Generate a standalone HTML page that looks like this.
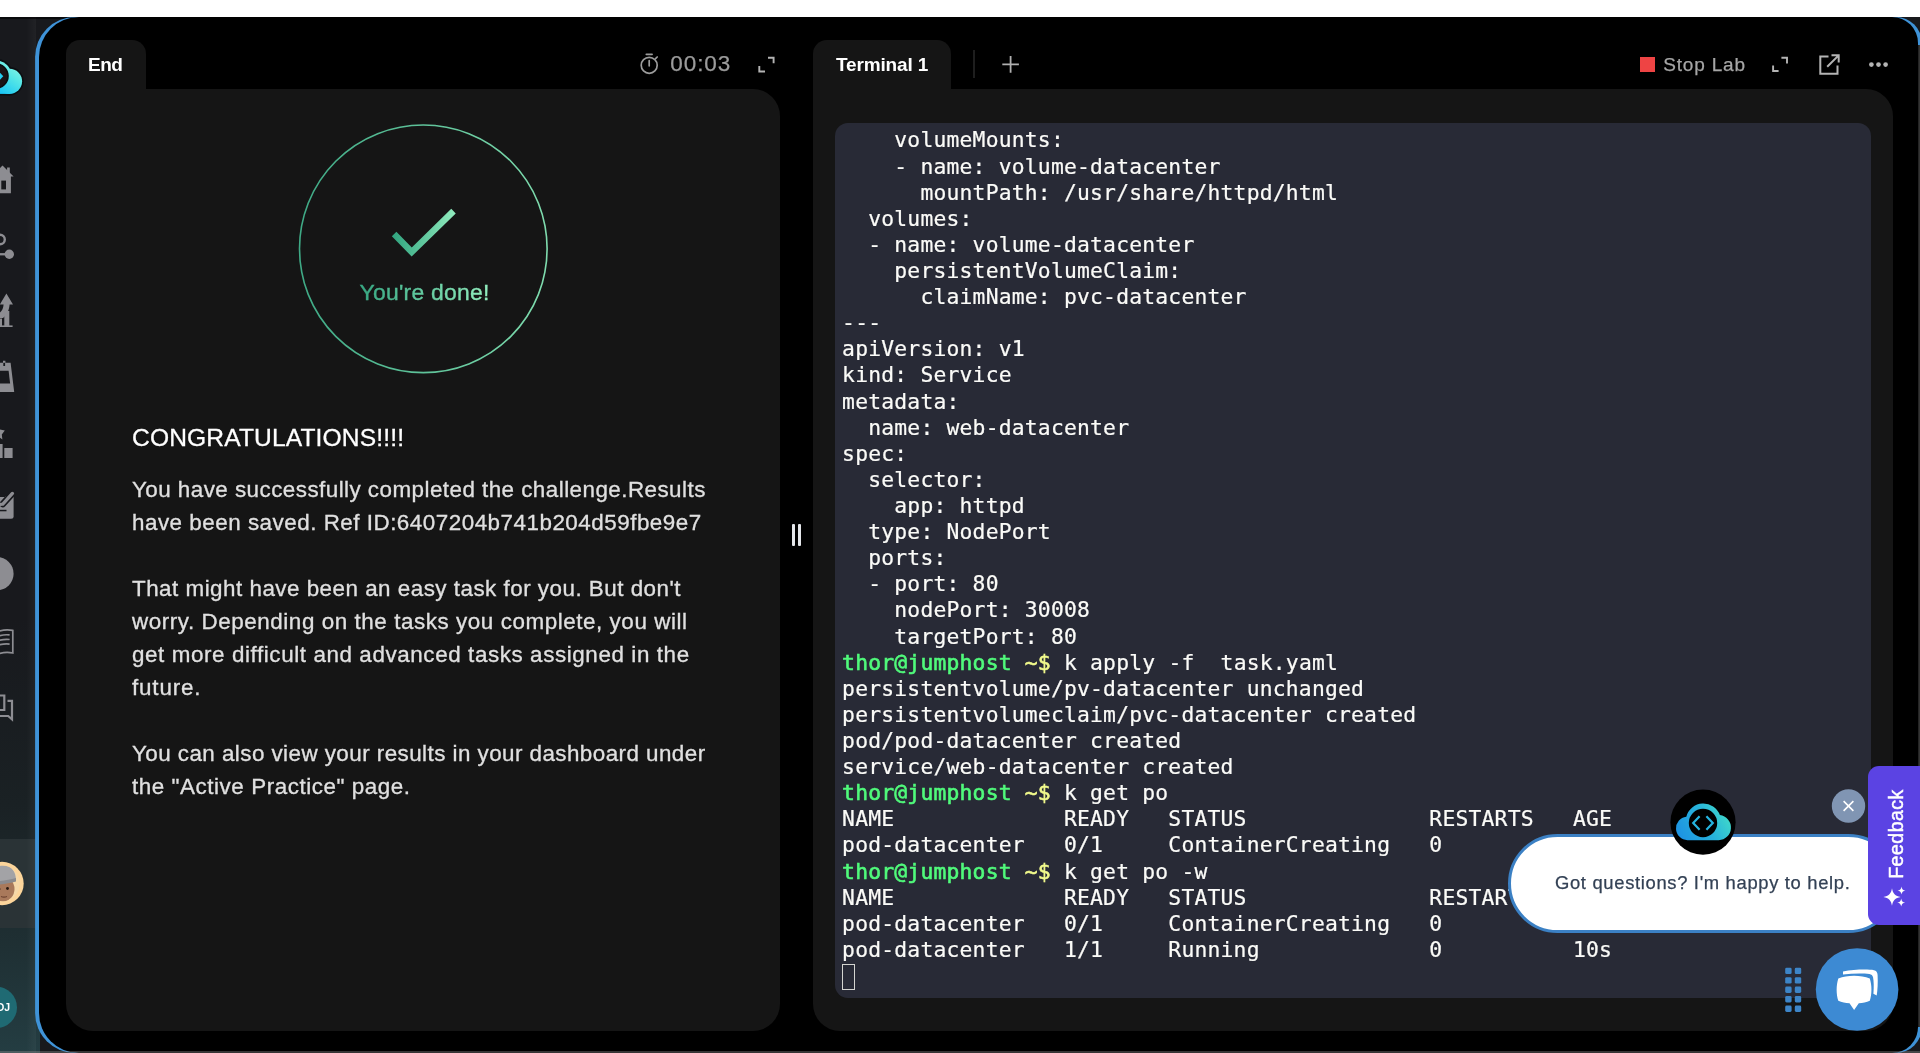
<!DOCTYPE html>
<html lang="en">
<head>
<meta charset="utf-8">
<title>Lab - End</title>
<style>
*{box-sizing:border-box;margin:0;padding:0}
html,body{width:1920px;height:1053px;overflow:hidden;background:#fff}
body{position:relative;font-family:"Liberation Sans",Arial,sans-serif;color:#e5e5e5}
#app{will-change:transform;position:absolute;left:0;top:17px;width:1920px;height:1036px;background:#18191d;overflow:hidden}
#sidebar{position:absolute;left:0;top:0;width:40px;height:1036px;background:linear-gradient(180deg,#18191d 0%,#18191d 58%,#1a2124 76%,#1f3034 90%,#243d42 100%)}
#sidebar .edge{position:absolute;left:26px;top:0;width:10px;height:100%;background:linear-gradient(90deg,rgba(255,255,255,0),rgba(255,255,255,0.04))}
#sidebar .hl{position:absolute;left:0;top:821.5px;width:36px;height:89.5px;background:#2a3336}
#main{position:absolute;left:39px;top:0;width:1879px;height:1035.8px;background:#000;border-radius:40px 26px 26px 40px;box-shadow:-3.9px 0 0 #3f93d8,3.9px 0 0 #3f93d8}
.abs{position:absolute}
/* panels (coordinates relative to #app: y = page y - 17) */
#ltab{left:66px;top:23px;width:80px;height:60px;background:#151515;border-radius:14px 14px 0 0}
#lpanel{left:66px;top:72.3px;width:714px;height:941.7px;background:#151515;border-radius:0 27px 27px 27px}
#rtab{left:813px;top:23px;width:138px;height:60px;background:#151515;border-radius:14px 14px 0 0}
#rpanel{left:813px;top:72.3px;width:1080px;height:941.7px;background:#151515;border-radius:0 27px 27px 27px}
.tabtxt{font-weight:bold;font-size:19px;color:#fff;white-space:nowrap;line-height:22px}
.hdr{color:#a0a0a0;white-space:nowrap}
#term{left:835.2px;top:105.6px;width:1035.6px;height:875.6px;background:#282a36;border-radius:13px;overflow:hidden}
#term pre{position:absolute;left:6.9px;top:4.9px;-webkit-text-stroke:0.22px;font-family:"DejaVu Sans Mono","Liberation Mono",monospace;font-size:21.33px;line-height:26.11px;letter-spacing:0.21px;color:#fbfbf8;white-space:pre}
#term .g{color:#50fa7b;-webkit-text-stroke:0.6px #50fa7b}
#term .y{color:#f1fa8c;-webkit-text-stroke:0.6px #f1fa8c}
.ln{position:absolute;left:132px;white-space:nowrap;font-size:22.4px;line-height:33px;color:#e0e0e0;-webkit-text-stroke:0.3px #e0e0e0}
</style>
</head>
<body>
<div id="app">
  <div id="sidebar"><div class="hl"></div><div class="edge"></div><div class="abs" style="left:0;top:0;width:75px;height:1.6px;background:rgba(0,0,0,0.55)"></div></div>
  <div id="main"></div>
  <div class="abs" style="left:1918.3px;top:28px;width:2px;height:982px;background:linear-gradient(90deg,#1c1c1c,#3c3c3c)"></div>
  <div class="abs" style="left:0;top:1034.2px;width:1920px;height:2px;background:rgba(150,150,150,0.36)"></div>


  <svg class="abs" id="sideicons" style="left:0;top:-17px" width="36" height="1053" viewBox="0 0 36 1053">
    <defs>
      <linearGradient id="lg" gradientUnits="userSpaceOnUse" x1="0" y1="94" x2="20" y2="66"><stop offset="0" stop-color="#16c4f6"/><stop offset="0.6" stop-color="#55e6e6"/><stop offset="1" stop-color="#8af6e6"/></linearGradient>
      <clipPath id="avc"><circle cx="2" cy="883.5" r="18"/></clipPath>
    </defs>
    <!-- logo -->
    <g fill="#0b0e11"><circle cx="-4" cy="76" r="17.2"/><circle cx="9.500" cy="81.300" r="14.200"/><rect x="-12" y="80" width="21.500" height="15.500"/></g>
    <g fill="url(#lg)"><circle cx="-4" cy="76" r="15.600"/><circle cx="9.500" cy="81.300" r="12.600"/><rect x="-12" y="81" width="21.500" height="12.900"/></g>
    <circle cx="-4" cy="76" r="12.800" fill="#0b0e11"/>
    <circle cx="-4" cy="76" r="11.200" fill="#1a1416"/>
    <path d="M-1.500 71l4.800 5.200l-4.800 5.200h-3.500v-10.400z" fill="#25cdf0"/>
    <path d="M-3.500 73.500l2.600 2.700l-2.600 2.700z" fill="#1a1416"/>
    <g fill="#8d8d92" stroke="none">
      <!-- home -->
      <path d="M2.500 165.400L13.600 176.600H10.900V193.200H-6V176.600H-8.600Z"/>
      <path d="M7.100 167.400h2.700v6.500h-2.700z"/>
      <rect x="1.300" y="180.600" width="4.700" height="8.800" fill="#18191d"/>
      <!-- share nodes -->
      <circle cx="0" cy="239.500" r="4.800" fill="none" stroke="#8d8d92" stroke-width="2.400"/>
      <path d="M-1 253.100h7v2.300h-7z"/>
      <circle cx="9.300" cy="254.200" r="4.700"/>
      <!-- growth arrow -->
      <path d="M6.400 293.600l6.600 10.900h-3.400c-.6 6-2.600 10-6.600 13.500h-6v-3.500c4-2 6.200-5 6.600-10h-3.800z"/>
      <path d="M4.300 311h5v15h-5zM-3 318.500h5v7.500h-5z"/>
      <path d="M-3 325.400h15.600v1.600h-15.600z"/>
      <!-- calendar -->
      <path d="M-3 362.800h13.600l3.600 29.200h-17.200zM3 360.800h2.400v4.500h-2.400z"/>
      <path d="M-3 370.800h11.600l1.500 12.700h-13.100z" fill="#18191d"/>
      <path d="M3.300 362.800h1.800v3.200h-1.800z" fill="#18191d"/>
      <!-- leaderboard -->
      <path d="M-3 429.500l3 0l4.800 1l-3 4l.6 5l-3.400-2.500l-3 1.500z"/>
      <path d="M-3 444h5.600v14h-5.600zM4.300 448h8.300v10h-8.300z"/>
      <!-- edit -->
      <path d="M-3 496h16.600v20.200a2.500 2.500 0 0 1 -2.500 2.500h-14.100z"/>
      <path d="M12.600 493.200L2.800 504" stroke="#18191d" stroke-width="6.600" stroke-linecap="round" fill="none"/>
      <path d="M-3 493.500h8v3.500h-8z" fill="#18191d"/>
      <path d="M12.400 493.400L2.800 504.200L-3 504.400" stroke="#8d8d92" stroke-width="3.300" stroke-linecap="round" stroke-linejoin="round" fill="none"/>
      <path d="M-3 509.800h9.500v1.500h-9.500z" fill="#18191d"/>
      <!-- circle -->
      <circle cx="-3" cy="573.700" r="16.600"/>
      <!-- book -->
      <g fill="none" stroke="#8d8d92" stroke-width="1.700">
        <path d="M-3 631.800c5-1.900 10.500-2.300 15.800-1.400v22.600c-5.300-1.100-10.800-.6-15.800 1.500"/>
        <path d="M-3 636.400c4.300-1.500 8.300-1.900 12.600-1.500M-3 641c4.300-1.500 8.300-1.900 12.600-1.500M-3 645.600c4.300-1.500 8.300-1.900 12.600-1.500"/>
      </g>
      <!-- chats -->
      <g fill="none" stroke="#8d8d92" stroke-width="2.200">
        <path d="M-3 695.500h7.300v14.500h-7.300"/>
        <path d="M7.500 700.800h4.500v18.500l-3.800-3.300h-11.200"/>
      </g>
    </g>
    <!-- avatar -->
    <circle cx="2" cy="883.500" r="21.700" fill="#fcd59b"/>
    <g clip-path="url(#avc)">
      <circle cx="2" cy="883.500" r="18" fill="#f6d8a8"/>
      <ellipse cx="3" cy="889" rx="11.500" ry="12.500" fill="#a9795b"/>
      <path d="M-12 884c0-12 6-18.500 15-18.500c8.500 0 13 6 13 15c-9 2.500-19 3-28 3.500z" fill="#a3a3a6"/>
      <path d="M-12 882c9-.5 19-1.500 28-4v3.500c-9 2.500-19 3.500-28 4z" fill="#8a8a8e"/>
      <circle cx="7.500" cy="888.500" r="1.400" fill="#2b1a12"/><circle cx="-1" cy="889" r="1.400" fill="#2b1a12"/>
      <path d="M1 896.500c2 .8 4 .8 6 0" stroke="#6d4330" stroke-width="1.200" fill="none"/>
    </g>
    <!-- DJ -->
    <circle cx="-3.600" cy="1007.400" r="20.600" fill="#1f6a73"/>
    <text x="-3.200" y="1011" font-family="Liberation Sans, Arial, sans-serif" font-weight="bold" font-size="10.500" fill="#fff" letter-spacing="-0.2">DJ</text>
  </svg>

  <!-- LEFT PANEL -->
  <div id="ltab" class="abs"></div>
  <div id="lpanel" class="abs"></div>
  <div class="abs tabtxt" id="endtxt" style="left:87.9px;top:36.7px;letter-spacing:-0.400px">End</div>


  <svg class="abs" style="left:296px;top:105px" width="254" height="254" viewBox="296 122 254 254">
    <defs>
      <linearGradient id="gg" gradientUnits="userSpaceOnUse" x1="298" y1="0" x2="548" y2="0"><stop offset="0" stop-color="#3ea985"/><stop offset="1" stop-color="#7fdcae"/></linearGradient>
      <linearGradient id="gc" gradientUnits="userSpaceOnUse" x1="391" y1="0" x2="456" y2="0"><stop offset="0" stop-color="#2ea27d"/><stop offset="1" stop-color="#92edbf"/></linearGradient>
    </defs>
    <circle cx="423.3" cy="248.8" r="123.8" fill="none" stroke="url(#gg)" stroke-width="1.6"/>
    <linearGradient id="gt" gradientUnits="userSpaceOnUse" x1="359" y1="0" x2="487" y2="0"><stop offset="0" stop-color="#36a782"/><stop offset="1" stop-color="#90ecbd"/></linearGradient>
    <text x="359.6" y="299.8" font-family="Liberation Sans, Arial, sans-serif" font-size="22.9" letter-spacing="0.25" fill="url(#gt)" stroke="url(#gt)" stroke-width="0.35">You're done!</text>
    <polyline points="394.1,234 411.7,252 453.5,211.1" fill="none" stroke="url(#gc)" stroke-width="6.4" stroke-linejoin="miter" stroke-linecap="butt"/>
  </svg>
  

  <div class="ln" id="h0" style="top:406.2px;font-size:24.6px;line-height:30px;color:#fff;-webkit-text-stroke:0.3px #fff;letter-spacing:0.130px">CONGRATULATIONS!!!!</div>
  <div class="ln" id="l1" style="top:456.2px;letter-spacing:0.462px">You have successfully completed the challenge.Results</div>
  <div class="ln" id="l2" style="top:489.2px;letter-spacing:0.508px">have been saved. Ref ID:6407204b741b204d59fbe9e7</div>
  <div class="ln" id="l3" style="top:555.2px;letter-spacing:0.494px">That might have been an easy task for you. But don't</div>
  <div class="ln" id="l4" style="top:588.2px;letter-spacing:0.568px">worry. Depending on the tasks you complete, you will</div>
  <div class="ln" id="l5" style="top:621.2px;letter-spacing:0.596px">get more difficult and advanced tasks assigned in the</div>
  <div class="ln" id="l6" style="top:654.2px;letter-spacing:0.850px">future.</div>
  <div class="ln" id="l7" style="top:720.2px;letter-spacing:0.449px">You can also view your results in your dashboard under</div>
  <div class="ln" id="l8" style="top:753.2px;letter-spacing:0.555px">the "Active Practice" page.</div>


  <!-- header left -->
  <svg class="abs" style="left:638px;top:34px" width="24" height="26" viewBox="638 51 24 26" fill="none" stroke="#9c9c9c" stroke-width="1.7" stroke-linecap="round">
    <circle cx="649.2" cy="65.3" r="8"/>
    <path d="M646.3 54.3h5.8M649.2 60.6v5.2M655.6 58.6l1.6-1.6"/>
  </svg>
  <div class="abs hdr" id="time" style="-webkit-text-stroke:0.25px #9c9c9c;left:670.3px;top:34.3px;font-size:22.5px;line-height:26px;letter-spacing:0.920px;color:#9c9c9c">00:03</div>
  <svg class="abs" style="left:756px;top:38px" width="20" height="20" viewBox="756 55 20 20" fill="none" stroke="#b4b4b4" stroke-width="1.9">
    <path d="M768 57.7h5.6v5.6M765 71.5h-5.7v-5.6"/>
  </svg>
  <!-- resizer -->
  <div class="abs" style="left:792.3px;top:507.2px;width:3px;height:22.2px;background:#e5e7eb;border-radius:1px"></div>
  <div class="abs" style="left:798px;top:507.2px;width:3px;height:22.2px;background:#e5e7eb;border-radius:1px"></div>

  <!-- RIGHT PANEL -->
  <div id="rtab" class="abs"></div>
  <div id="rpanel" class="abs"></div>
  <div class="abs tabtxt" id="termtxt" style="left:836px;top:36.7px;letter-spacing:-0.150px">Terminal 1</div>


  <!-- header right -->
  <div class="abs" style="left:973.2px;top:33.3px;width:1.8px;height:27.5px;background:#1e1e1e"></div>
  <svg class="abs" style="left:1000px;top:37px" width="22" height="22" viewBox="1000 54 22 22" fill="none" stroke="#b0b0b0" stroke-width="1.8">
    <path d="M1002.3 64.4h16.6M1010.6 56.1v16.6"/>
  </svg>
  <div class="abs" style="left:1640.2px;top:39.8px;width:15px;height:15px;background:#ee4444"></div>
  <div class="abs hdr" id="stop" style="-webkit-text-stroke:0.25px #a6a6a6;left:1663.3px;top:36.5px;font-size:19px;line-height:22px;letter-spacing:0.810px;color:#a6a6a6">Stop Lab</div>
  <svg class="abs" style="left:1770px;top:38px" width="20" height="20" viewBox="1770 55 20 20" fill="none" stroke="#b4b4b4" stroke-width="1.9">
    <path d="M1781.4 57.8h5.6v5.6M1778.6 71h-5.5v-5.6"/>
  </svg>
  <svg class="abs" style="left:1816px;top:34px" width="28" height="28" viewBox="1816 51 28 28" fill="none" stroke="#b4b4b4" stroke-width="2">
    <path d="M1828.5 56.5h-8.2v17.2h17.2v-8.2"/>
    <path d="M1831.5 55.3h7.2v7.2M1838.4 55.6l-11.2 11.2"/>
  </svg>
  <svg class="abs" style="left:1866px;top:42px" width="26" height="12" viewBox="1866 59 26 12" fill="#b4b4b4">
    <circle cx="1871.4" cy="64.6" r="2.35"/><circle cx="1878.5" cy="64.6" r="2.35"/><circle cx="1885.6" cy="64.6" r="2.35"/>
  </svg>

  <div id="term" class="abs"><pre>    volumeMounts:
    - name: volume-datacenter
      mountPath: /usr/share/httpd/html
  volumes:
  - name: volume-datacenter
    persistentVolumeClaim:
      claimName: pvc-datacenter
---
apiVersion: v1
kind: Service
metadata:
  name: web-datacenter
spec:
  selector:
    app: httpd
  type: NodePort
  ports:
  - port: 80
    nodePort: 30008
    targetPort: 80
<span class="g">thor@jumphost</span> <span class="y">~$</span> k apply -f  task.yaml
persistentvolume/pv-datacenter unchanged
persistentvolumeclaim/pvc-datacenter created
pod/pod-datacenter created
service/web-datacenter created
<span class="g">thor@jumphost</span> <span class="y">~$</span> k get po
NAME             READY   STATUS              RESTARTS   AGE
pod-datacenter   0/1     ContainerCreating   0
<span class="g">thor@jumphost</span> <span class="y">~$</span> k get po -w
NAME             READY   STATUS              RESTARTS   AGE
pod-datacenter   0/1     ContainerCreating   0
pod-datacenter   1/1     Running             0          10s</pre>
<div class="abs" id="cursor" style="left:6.8px;top:841.6px;width:13.5px;height:26px;border:1px solid #d4d4d0"></div></div>

  <!-- floating widgets (page coordinates via wrapper) -->
  <div class="abs" id="float" style="left:0;top:-17px;width:1920px;height:1053px;pointer-events:none">
    <div class="abs" id="bubble" style="left:1508.3px;top:833.5px;width:390px;height:99.3px;background:#fff;border:3.1px solid #3b80c4;border-radius:50px"></div>
    <div class="abs" id="btxt" style="-webkit-text-stroke:0.25px #334155;left:1555px;top:872.3px;font-size:18.4px;line-height:22px;letter-spacing:0.67px;color:#334155;white-space:nowrap">Got questions? I'm happy to help.</div>
    <svg class="abs" style="left:1668px;top:787px" width="70" height="70" viewBox="1668 787 70 70">
      <defs><linearGradient id="cg" gradientUnits="userSpaceOnUse" x1="1676" y1="838" x2="1730" y2="808"><stop offset="0" stop-color="#1c8fe3"/><stop offset="0.55" stop-color="#27b3dc"/><stop offset="1" stop-color="#45e0c6"/></linearGradient></defs>
      <circle cx="1703" cy="822.2" r="32.6" fill="#000"/>
      <path d="M1687.5 840.2a11.8 11.8 0 0 1 -1.2 -23.5a17.6 17.6 0 0 1 33.6 -1.6a12.6 12.6 0 0 1 -1.2 25.1z" fill="url(#cg)"/>
      <circle cx="1703" cy="823" r="14.2" fill="#000"/>
      <path d="M1699.6 816.2l-6.4 6.8l6.4 6.8M1706.4 816.2l6.4 6.8l-6.4 6.8" fill="none" stroke="#25b4e0" stroke-width="2.2"/>
    </svg>
    <svg class="abs" style="left:1830px;top:788px" width="36" height="36" viewBox="1830 788 36 36">
      <circle cx="1848.5" cy="806" r="16.7" fill="#8095b3"/>
      <path d="M1843.6 801.1l9.8 9.8M1853.4 801.1l-9.8 9.8" stroke="#fff" stroke-width="1.6" fill="none"/>
    </svg>
    <div class="abs" id="fb" style="left:1868.2px;top:766px;width:60px;height:159.3px;background:#5b43e3;border-radius:11px 0 0 11px"></div>
    <div class="abs" id="fbtxt" style="left:1845.5px;top:822.9px;width:100px;height:22px;transform:rotate(-90deg);font-size:19.6px;line-height:22px;letter-spacing:0.45px;-webkit-text-stroke:0.45px #fff;color:#fff;white-space:nowrap;text-align:center">Feedback</div>
    <svg class="abs" style="left:1880px;top:882px" width="30" height="30" viewBox="1880 882 30 30" fill="#fff">
      <path d="M1892 888.200c.8 5.300 3.200 7.800 8.600 8.800c-5.400 1-7.800 3.500-8.600 8.800c-.8-5.300-3.200-7.800-8.600-8.800c5.400-1 7.800-3.500 8.600-8.800z"/>
      <path d="M1901.500 886.400c.4 2.600 1.400 3.700 4 4.100c-2.600.4-3.600 1.500-4 4.100c-.4-2.600-1.400-3.700-4-4.100c2.600-.4 3.600-1.500 4-4.100z"/>
      <path d="M1901.200 898.400c.4 2.600 1.400 3.700 4 4.100c-2.600.4-3.600 1.500-4 4.100c-.4-2.600-1.400-3.700-4-4.100c2.600-.4 3.600-1.500 4-4.100z"/>
    </svg>
    <svg class="abs" style="left:1780px;top:962px" width="30" height="56" viewBox="1780 962 30 56" fill="#3d85c8">
      <g id="gd"><rect x="1785.200" y="967.7" width="6.4" height="6.4" rx="1.4"/><rect x="1794.8" y="967.7" width="6.4" height="6.4" rx="1.4"/></g>
      <use href="#gd" y="9.45"/><use href="#gd" y="18.9"/><use href="#gd" y="28.35"/><use href="#gd" y="37.8"/>
    </svg>
    <svg class="abs" style="left:1810px;top:942px" width="96" height="96" viewBox="1810 942 96 96">
      <circle cx="1857.1" cy="989.5" r="41.3" fill="#3d8ad3"/>
      <path d="M1843 971.400C1854 969.400 1868 969.200 1874 970.200Q1877.400 970.900 1877.600 975C1878 983 1877.600 990 1876.700 995.600L1873.400 993.800C1874 987 1873.800 981 1873 977Q1872.500 974.400 1869.500 974C1862 973.200 1852 973.400 1843 974.600Z" fill="#fff"/>
      <path d="M1838.300 978.500c9-3.600 22.500-3.600 31.500 0c2.200 7 2.200 15.500 0 22.300c-3.300 1.500-7 2.200-11 2.500l-4.700 6.800l-4.600-6.800c-4-.3-7.800-1-11.200-2.500c-2.200-6.800-2.200-15.300 0-22.300z" fill="#fff"/>
    </svg>
  </div>
</div>
</body>
</html>
